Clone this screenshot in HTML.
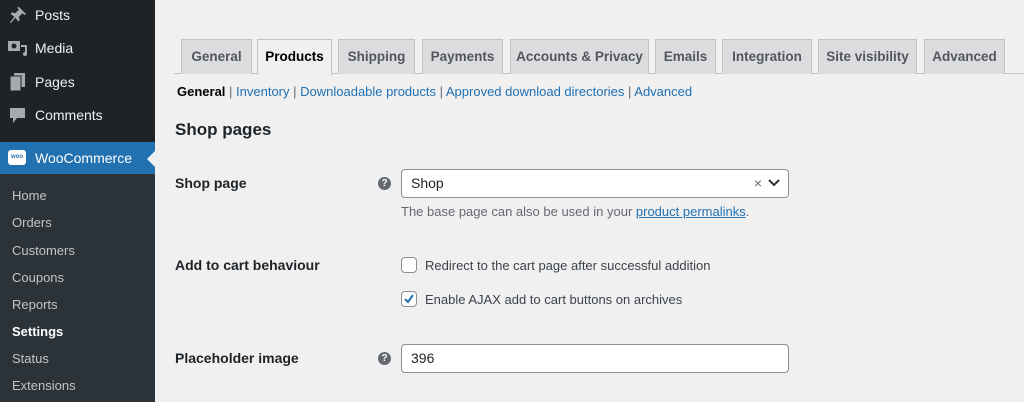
<!DOCTYPE html>
<html><head><meta charset="utf-8"><style>
*{margin:0;padding:0;box-sizing:border-box}
body{width:1024px;height:402px;overflow:hidden;background:#f0f0f1;font-family:"Liberation Sans",sans-serif;font-size:13px;color:#1d2327;position:relative}
.a{position:absolute;white-space:nowrap}
#side{position:absolute;left:0;top:0;width:155px;height:402px;background:#1d2327}
#sub{position:absolute;left:0;top:174px;width:155px;height:228px;background:#2c3338}
.mi{color:#f0f0f1;font-size:14px}
.si{color:#c3c4c7;font-size:13px;left:12px}
.tab{position:absolute;top:39px;height:35px;background:#dcdcde;border:1px solid #c3c4c7;border-bottom:none;font-size:13.5px;font-weight:bold;color:#50575e;text-align:center;line-height:33px}
.tab.on{background:#f0f0f1;color:#000;height:36px}
a{color:#2271b1;text-decoration:none}
.lbl{font-size:14px;font-weight:bold;color:#1d2327;left:175px}
.help{width:13px;height:13px;border-radius:50%;background:#646970;color:#fff;font-size:10px;font-weight:bold;text-align:center;line-height:13px}
.inp{position:absolute;left:401px;width:388px;height:29px;background:#fff;border:1px solid #8c8f94;border-radius:4px;font-size:14px;padding-left:9px;line-height:27px}
.cb{position:absolute;left:401px;width:16px;height:16px;border:1px solid #8c8f94;border-radius:4px;background:#fff}
</style></head><body>
<div id="side"></div><div id="sub"></div>
<svg class="a" style="left:9px;top:6px" width="18" height="18" viewBox="0 0 20 20"><path fill="#a7aaad" d="M11 1l8 8-2 1-2-2-4 4 1 4-2 1-3-4-5 6-1-1 5-6-4-3 1-2 4 1 4-4-2-2z"/></svg>
<div class="a mi" style="left:35px;top:7px">Posts</div>
<svg class="a" style="left:8px;top:39px" width="20" height="18" viewBox="0 0 20 18"><rect x="0" y="2" width="12" height="10" fill="#a7aaad"/><circle cx="6" cy="7" r="2.5" fill="#1d2327"/><path fill="#a7aaad" d="M13 6h6v9a2 2 0 1 1-2-2V8h-4z"/></svg>
<div class="a mi" style="left:35px;top:40px">Media</div>
<svg class="a" style="left:10px;top:73px" width="16" height="18" viewBox="0 0 16 18"><rect x="4" y="0" width="11" height="14" fill="#a7aaad"/><rect x="0" y="3" width="11" height="15" fill="#a7aaad" stroke="#1d2327" stroke-width="1"/></svg>
<div class="a mi" style="left:35px;top:74px">Pages</div>
<svg class="a" style="left:9px;top:107px" width="17" height="17" viewBox="0 0 17 17"><path fill="#a7aaad" d="M1 1h15v10H8l-4 5v-5H1z"/></svg>
<div class="a mi" style="left:35px;top:107px">Comments</div>
<div class="a" style="left:0;top:142px;width:155px;height:32px;background:#2271b1"></div>
<div class="a" style="left:8px;top:150px;width:18px;height:15px;background:#fff;border-radius:3px;color:#2271b1;font-size:6px;font-weight:bold;text-align:center;line-height:15px">woo</div>
<div class="a mi" style="left:35px;top:150px;color:#fff">WooCommerce</div>
<div class="a" style="left:147px;top:151px;width:0;height:0;border-top:8px solid transparent;border-bottom:8px solid transparent;border-right:8px solid #f0f0f1"></div>
<div class="a si" style="top:188px">Home</div>
<div class="a si" style="top:215px">Orders</div>
<div class="a si" style="top:243px">Customers</div>
<div class="a si" style="top:270px">Coupons</div>
<div class="a si" style="top:297px">Reports</div>
<div class="a si" style="top:324px;color:#fff;font-weight:bold">Settings</div>
<div class="a si" style="top:351px">Status</div>
<div class="a si" style="top:378px">Extensions</div>

<div class="a" style="left:174px;top:73px;width:850px;height:1px;background:#c3c4c7"></div>
<div class="tab" style="left:181px;width:71px">General</div>
<div class="tab on" style="left:257px;width:75px">Products</div>
<div class="tab" style="left:338px;width:77px">Shipping</div>
<div class="tab" style="left:422px;width:81px">Payments</div>
<div class="tab" style="left:510px;width:139px">Accounts &amp; Privacy</div>
<div class="tab" style="left:655px;width:61px">Emails</div>
<div class="tab" style="left:722px;width:90px">Integration</div>
<div class="tab" style="left:818px;width:99px">Site visibility</div>
<div class="tab" style="left:924px;width:81px">Advanced</div>

<div class="a" style="left:177px;top:84px;font-size:13px;color:#646970"><b style="color:#000">General</b> | <a>Inventory</a> | <a>Downloadable products</a> | <a>Approved download directories</a> | <a>Advanced</a></div>

<div class="a" style="left:175px;top:120px;font-size:17px;font-weight:bold;color:#1d2327">Shop pages</div>

<div class="a lbl" style="top:175px">Shop page</div>
<div class="a help" style="left:378px;top:177px">?</div>
<div class="inp" style="top:169px">Shop<span style="position:absolute;right:26px;color:#666">×</span><svg style="position:absolute;right:8px;top:9px" width="12" height="8" viewBox="0 0 12 8"><path d="M1 1l5 5 5-5" fill="none" stroke="#333" stroke-width="2"/></svg></div>
<div class="a" style="left:401px;top:204px;color:#646970;font-size:13px">The base page can also be used in your <a style="text-decoration:underline">product permalinks</a>.</div>

<div class="a lbl" style="top:257px">Add to cart behaviour</div>
<div class="cb" style="top:257px"></div>
<div class="a" style="left:425px;top:258px;font-size:13px;color:#3c434a">Redirect to the cart page after successful addition</div>
<div class="cb" style="top:291px"><svg style="position:absolute;left:1px;top:1px" width="12" height="12" viewBox="0 0 12 12"><path d="M2 6l3 3 5-7" fill="none" stroke="#2271b1" stroke-width="2"/></svg></div>
<div class="a" style="left:425px;top:292px;font-size:13px;color:#3c434a">Enable AJAX add to cart buttons on archives</div>

<div class="a lbl" style="top:350px">Placeholder image</div>
<div class="a help" style="left:378px;top:352px">?</div>
<div class="inp" style="top:344px">396</div>
</body></html>
